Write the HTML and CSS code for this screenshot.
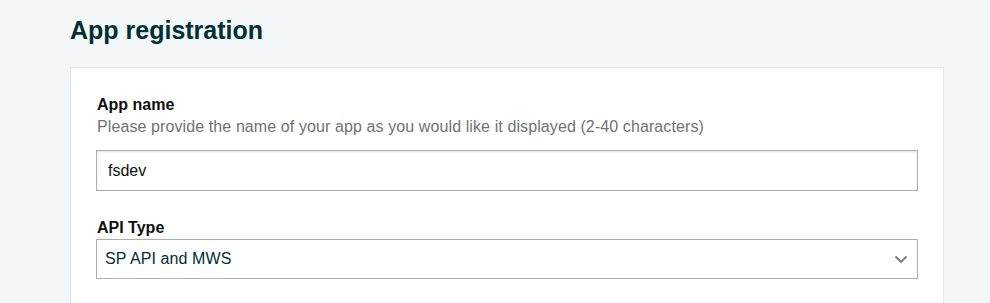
FILE: index.html
```html
<!DOCTYPE html>
<html lang="en">
<head>
<meta charset="utf-8">
<title>App registration</title>
<link rel="stylesheet" href="styles.css">
</head>
<body>
<main class="page">
  <h1 class="title">App registration</h1>
  <section class="card">
    <div class="field">
      <label class="label" for="appname">App name</label>
      <div class="hint">Please provide the name of your app as you would like it displayed (2-40 characters)</div>
      <input class="input" id="appname" type="text" value="fsdev">
    </div>
    <div class="field field-api">
      <label class="label" for="apitype">API Type</label>
      <div class="select">
        <span class="select-value">SP API and MWS</span>
        <svg class="chevron" width="14" height="9" viewBox="0 0 14 9" aria-hidden="true"><path d="M1.5 1.5 L7 7 L12.5 1.5" fill="none" stroke="#6f7b7c" stroke-width="1.8"/></svg>
      </div>
    </div>
  </section>
</main>
</body>
</html>
```
FILE: styles.css
```css
html, body {
  margin: 0;
  padding: 0;
  background: #f4f7f7;
  font-family: "Liberation Sans", Arial, sans-serif;
  overflow: hidden;
}
.page {
  padding: 14px 0 0 70px;
}
.title {
  margin: 0;
  font-size: 25px;
  line-height: 32px;
  font-weight: 700;
  color: #002f36;
}
.card {
  margin-top: 21px;
  width: 822px;
  background: #ffffff;
  border: 1px solid #e3e8e8;
  padding: 26px 25px 30px 25px;
}
.label {
  display: block;
  font-size: 16px;
  line-height: 22px;
  font-weight: 700;
  color: #0f1111;
  padding-left: 1px;
}
.hint {
  font-size: 16px;
  line-height: 22px;
  color: #6f7373;
  padding-left: 1px;
  letter-spacing: 0.1px;
}
.input {
  display: block;
  box-sizing: border-box;
  width: 822px;
  height: 41px;
  margin: 12px 0 0 0;
  padding: 0 11px;
  border: 1px solid #a6b2b2;
  border-radius: 0;
  box-shadow: inset 0 1px 2px rgba(15, 17, 17, 0.12);
  font-family: "Liberation Sans", Arial, sans-serif;
  font-size: 16px;
  color: #0f1111;
  background: #fff;
  outline: none;
}
.field-api {
  margin-top: 26px;
}
.select {
  box-sizing: border-box;
  width: 822px;
  height: 40px;
  border: 1px solid #a6b2b2;
  padding: 0 8px 0 8px;
  display: flex;
  align-items: center;
  justify-content: space-between;
  background: #fff;
}
.select-value {
  font-size: 16px;
  line-height: 22px;
  color: #002f36;
  letter-spacing: 0.1px;
}
.chevron {
  margin-right: 1px;
}
```
